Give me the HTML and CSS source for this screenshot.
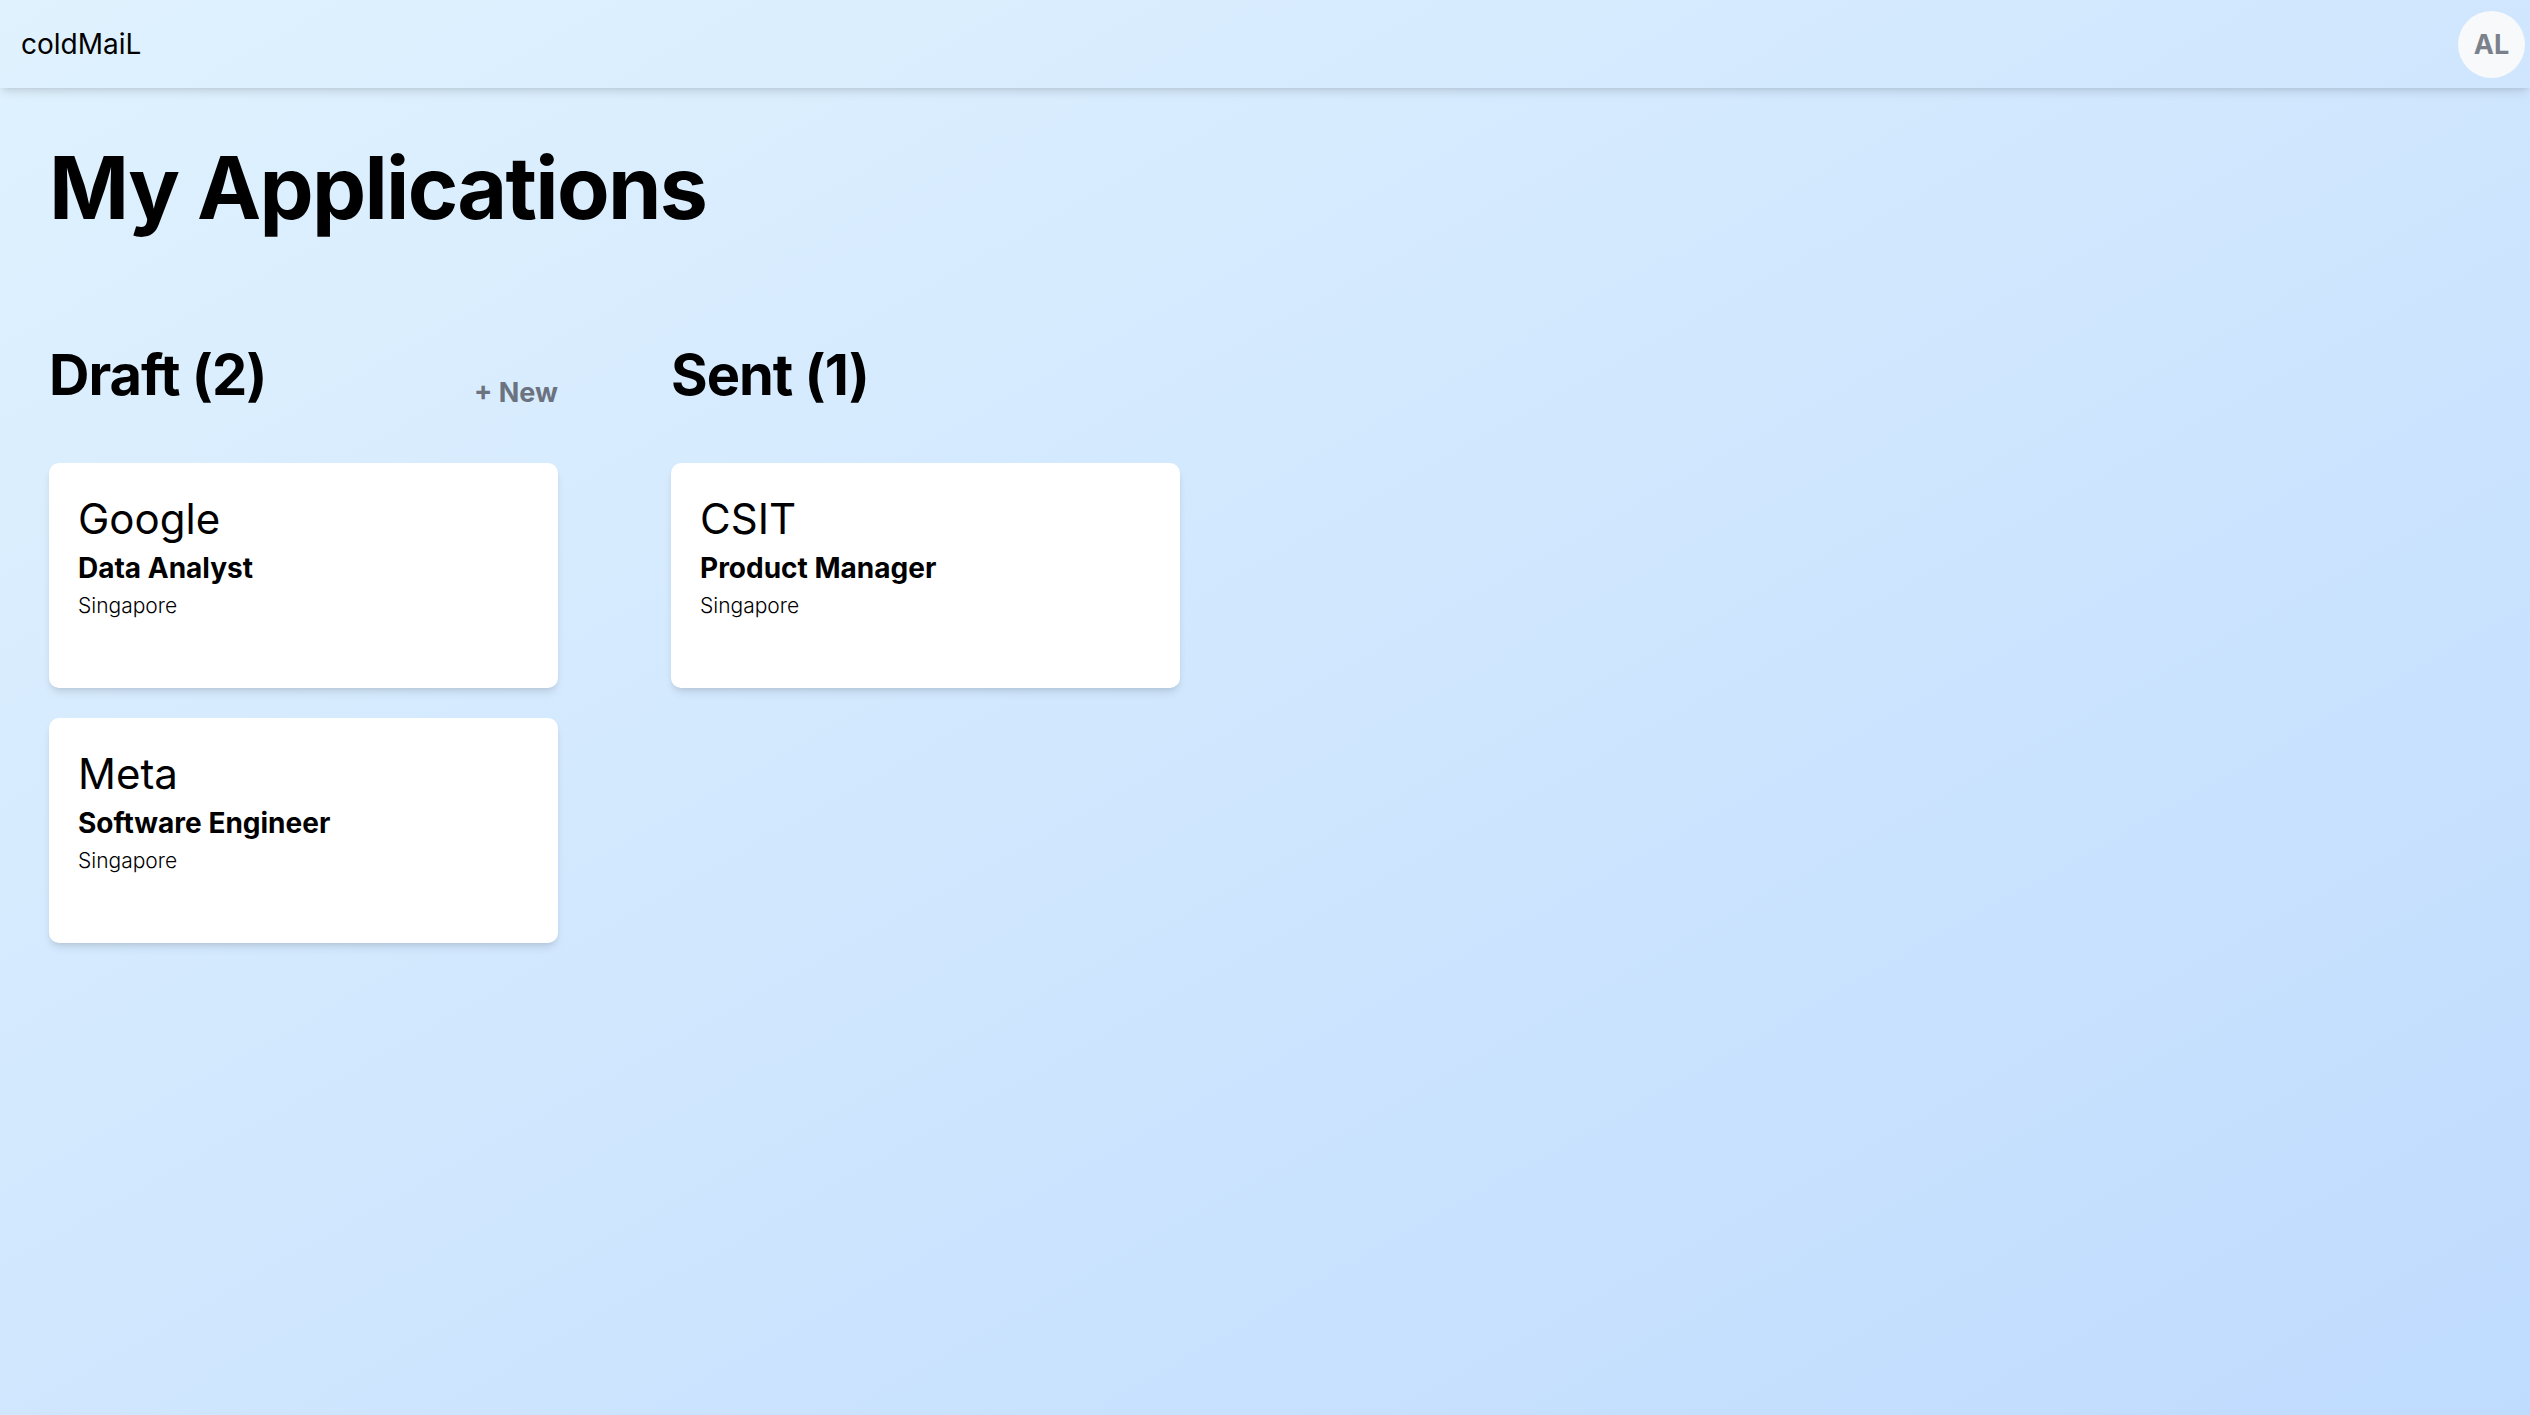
FILE: index.html
```html
<!DOCTYPE html>
<html lang="en">
<head>
<meta charset="utf-8">
<title>coldMaiL</title>
<link rel="stylesheet" href="styles.css">
</head>
<body>
<header class="topbar">
  <div class="logo">coldMaiL</div>
  <div class="avatar">AL</div>
</header>
<main class="page">
  <h1 class="title">My Applications</h1>
  <div class="board">
    <section class="column">
      <div class="column-head">
        <h2 class="column-title">Draft (2)</h2>
        <button class="new-btn">+ New</button>
      </div>
      <div class="cards">
        <article class="card">
          <div class="company">Google</div>
          <div class="role">Data Analyst</div>
          <div class="location">Singapore</div>
        </article>
        <article class="card">
          <div class="company">Meta</div>
          <div class="role">Software Engineer</div>
          <div class="location">Singapore</div>
        </article>
      </div>
    </section>
    <section class="column">
      <div class="column-head">
        <h2 class="column-title">Sent (1)</h2>
      </div>
      <div class="cards">
        <article class="card">
          <div class="company">CSIT</div>
          <div class="role">Product Manager</div>
          <div class="location">Singapore</div>
        </article>
      </div>
    </section>
  </div>
</main>
</body>
</html>
```
FILE: styles.css
```css
html, body {
  margin: 0;
  padding: 0;
}
body {
  min-height: 100vh;
  font-family: Inter, "Noto Sans", "Liberation Sans", sans-serif;
  color: #000;
  background: linear-gradient(to bottom right, #e0f2fe, #bfdbfe);
}
.topbar {
  height: 88px;
  box-sizing: border-box;
  display: flex;
  align-items: center;
  justify-content: space-between;
  padding: 0 5px 0 21px;
  box-shadow: 0 6px 10px -2px rgba(0,0,0,0.1), 0 3px 6px -3px rgba(0,0,0,0.1);
}
.logo {
  font-size: 28px;
  font-weight: 400;
}
.avatar {
  width: 67px;
  height: 67px;
  border-radius: 50%;
  background: #f7f9fb;
  display: flex;
  align-items: center;
  justify-content: center;
  font-size: 27px;
  font-weight: 700;
  color: #7b818a;
}
.page {
  padding: 0 49px;
}
.title {
  margin: 57px 0 0;
  font-size: 86px;
  line-height: 1;
  font-weight: 700;
  letter-spacing: -0.02em;
}
.board {
  display: flex;
  gap: 113px;
  margin-top: 109px;
}
.column {
  width: 509px;
}
.column-head {
  display: flex;
  justify-content: space-between;
  align-items: flex-end;
  height: 70px;
}
.column-title {
  margin: 0;
  font-size: 56px;
  line-height: 70px;
  font-weight: 700;
  letter-spacing: -0.018em;
}
.new-btn {
  border: 0;
  background: none;
  padding: 0;
  margin-bottom: -2px;
  font-family: inherit;
  font-size: 27px;
  line-height: 38px;
  font-weight: 700;
  color: #6b7280;
}
.cards {
  margin-top: 53px;
  display: flex;
  flex-direction: column;
  gap: 30px;
}
.card {
  height: 225px;
  box-sizing: border-box;
  padding: 30px 29px 29px;
  background: #fff;
  border-radius: 10px;
  box-shadow: 0 6px 10px -2px rgba(0,0,0,0.1), 0 3px 6px -3px rgba(0,0,0,0.1);
}
.company {
  font-size: 42px;
  line-height: 52px;
  font-weight: 400;
}
.role {
  font-size: 28px;
  line-height: 46px;
  font-weight: 700;
}
.location {
  font-size: 21px;
  line-height: 30px;
  font-weight: 300;
}
```
